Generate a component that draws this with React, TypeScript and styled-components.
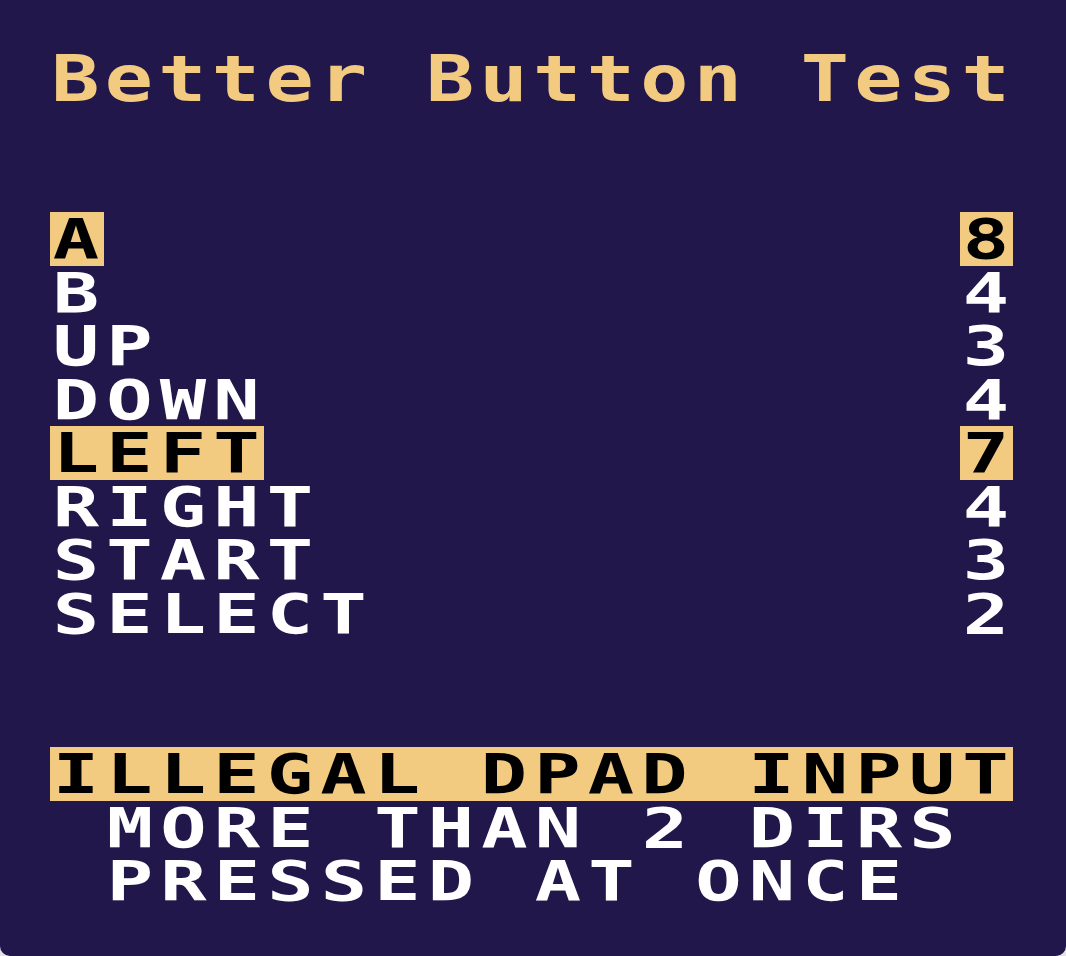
import React from 'react';
import styled, { createGlobalStyle } from 'styled-components'

// one character cell of the test screen, in css px
const CELL = 53.5

interface ButtonStat {
    label: string
    count: number
    held: boolean
}

const buttons: ButtonStat[] = [
    { label: 'A', count: 8, held: true },
    { label: 'B', count: 4, held: false },
    { label: 'UP', count: 3, held: false },
    { label: 'DOWN', count: 4, held: false },
    { label: 'LEFT', count: 7, held: true },
    { label: 'RIGHT', count: 4, held: false },
    { label: 'START', count: 3, held: false },
    { label: 'SELECT', count: 2, held: false },
]

const Glyphs = (props: { text: string, lit?: boolean }) => {
    return (
        <Tile $cols={props.text.length} $lit={props.lit}>
            <Ink>{props.text}</Ink>
        </Tile>
    )
}

const App = () => {
    return (
        <>
            <Global />
            <Screen>
                <Title>Better Button Test</Title>
                <ButtonList>
                    {buttons.map(b => (
                        <ButtonRow key={b.label}>
                            <Glyphs text={b.label} lit={b.held} />
                            <Glyphs text={String(b.count)} lit={b.held} />
                        </ButtonRow>
                    ))}
                </ButtonList>
                <Notice>
                    <Glyphs text="ILLEGAL DPAD INPUT" lit />
                    <Detail>
                        <Glyphs text="MORE THAN 2 DIRS" />
                    </Detail>
                    <Detail>
                        <Glyphs text="PRESSED AT ONCE" />
                    </Detail>
                </Notice>
            </Screen>
        </>
    )
}

const Global = createGlobalStyle`
    html, body {
        margin: 0;
        padding: 0;
        background: #e4e3ea;
    }
`
const Screen = styled.div`
    width: 1066px;
    height: 956px;
    box-sizing: border-box;
    padding: 51.5px 0 0 50px;
    background: #21174a;
    border-radius: 0 0 10px 10px;
    overflow: hidden;
    display: flex;
    flex-direction: column;
`
const Title = styled.div`
    height: ${CELL}px;
    font-family: "DejaVu Sans Mono", monospace;
    font-weight: bold;
    font-size: 64px;
    line-height: ${CELL}px;
    color: #f2cb80;
    white-space: pre;
    letter-spacing: 4.3px;
    transform: scaleX(1.25);
    transform-origin: left center;
    padding-left: 1px;
    position: relative;
    top: 1px;
`
const ButtonList = styled.div`
    margin-top: ${CELL * 2}px;
    display: flex;
    flex-direction: column;
`
const ButtonRow = styled.div`
    width: ${CELL * 18}px;
    height: ${CELL}px;
    display: flex;
    justify-content: space-between;
`
const Tile = styled.div<{ $cols: number, $lit?: boolean }>`
    width: ${(p): number => p.$cols * CELL}px;
    height: ${CELL}px;
    background: ${(p): string => p.$lit ? '#f2cb80' : 'transparent'};
    color: ${(p): string => p.$lit ? '#000000' : '#ffffff'};
    overflow: visible;
`
const Ink = styled.span`
    display: inline-block;
    font-family: "DejaVu Sans Mono", monospace;
    font-weight: bold;
    font-size: 55px;
    line-height: ${CELL}px;
    white-space: pre;
    letter-spacing: 5.1px;
    padding-left: 2px;
    transform: translate(0, 1px) scaleX(1.4);
    transform-origin: left center;
`
const Notice = styled.div`
    margin-top: ${CELL * 2}px;
    display: flex;
    flex-direction: column;
`
const Detail = styled.div`
    padding-left: ${CELL}px;
`
export default App;
